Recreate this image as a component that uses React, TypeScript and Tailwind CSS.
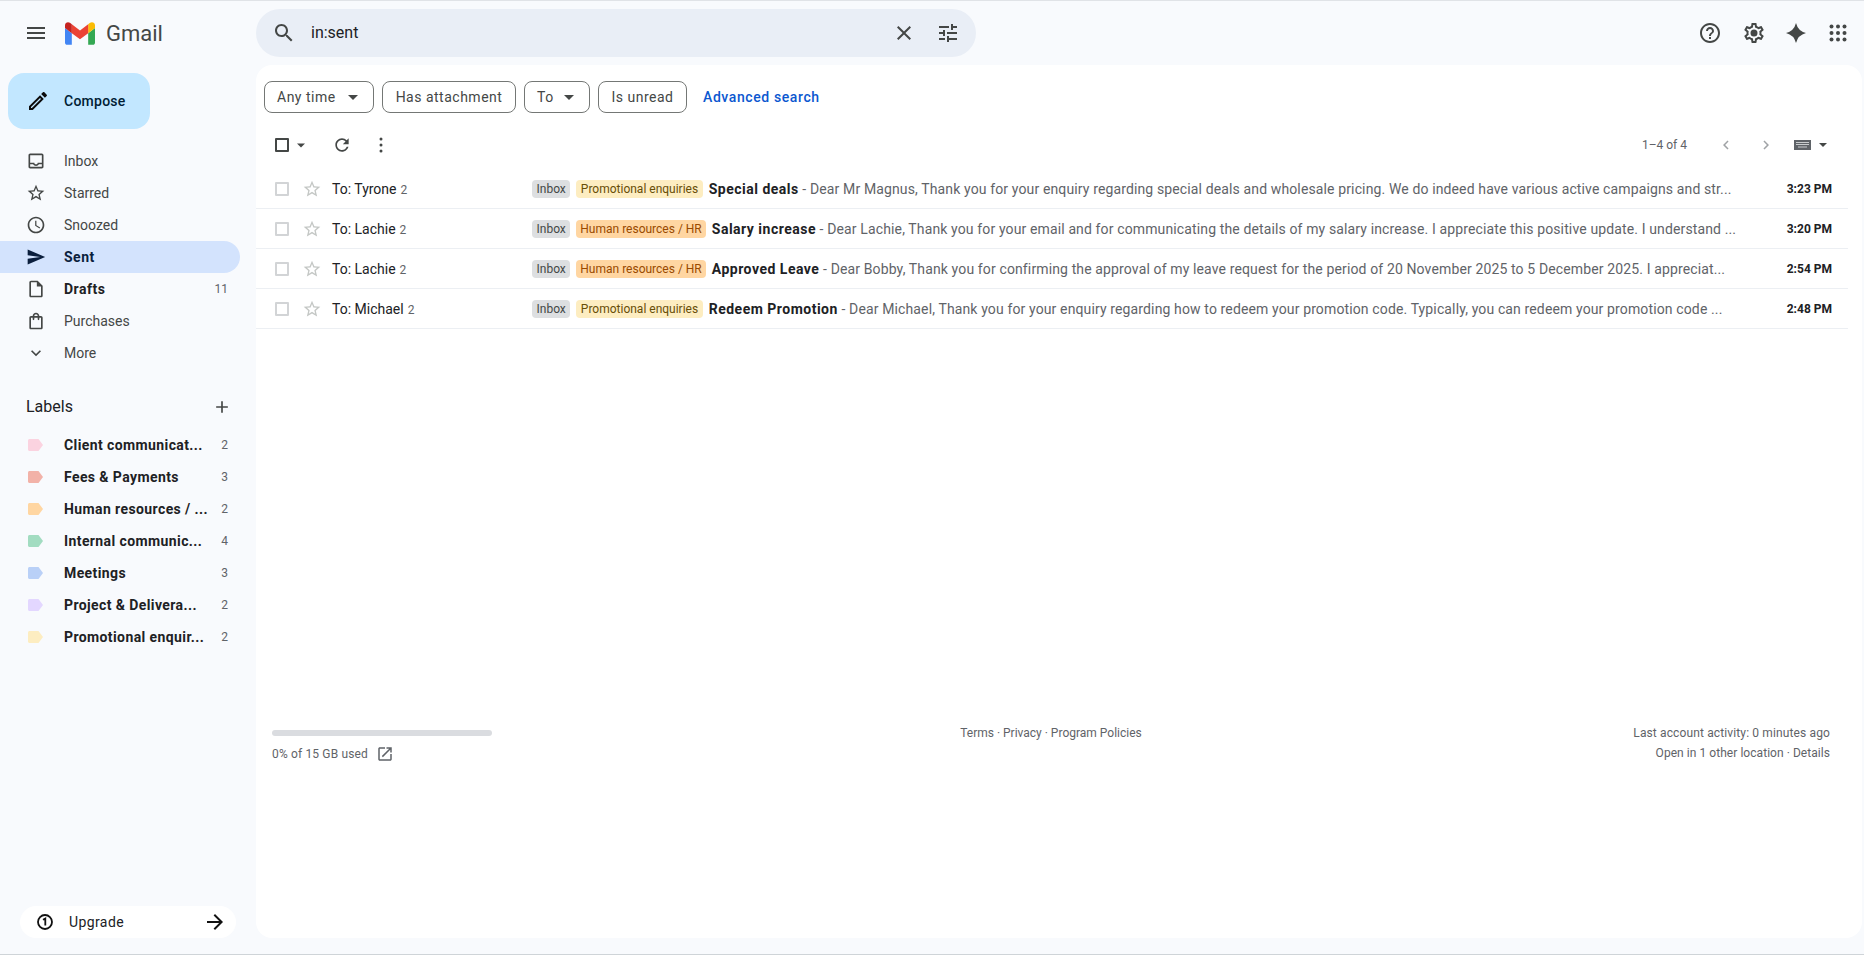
import type { ReactNode } from 'react';

const P = {
  menu: 'M3 18h18v-2H3v2zm0-5h18v-2H3v2zm0-7v2h18V6H3z',
  search: 'M15.5 14h-.79l-.28-.27C15.41 12.59 16 11.11 16 9.5 16 5.91 13.09 3 9.5 3S3 5.91 3 9.5 5.91 16 9.5 16c1.61 0 3.09-.59 4.23-1.57l.27.28v.79l5 4.99L20.49 19l-4.99-5zm-6 0C7.01 14 5 11.99 5 9.5S7.01 5 9.5 5 14 7.01 14 9.5 11.99 14 9.5 14z',
  close: 'M19 6.41L17.59 5 12 10.59 6.41 5 5 6.41 10.59 12 5 17.59 6.41 19 12 13.41 17.59 19 19 17.59 13.41 12z',
  tune: 'M3 17v2h6v-2H3zM3 5v2h10V5H3zm10 16v-2h8v-2h-8v-2h-2v6h2zM7 9v2H3v2h4v2h2V9H7zm14 4v-2H11v2h10zm-6-4h2V7h4V5h-4V3h-2v6z',
  help: 'M11 18h2v-2h-2v2zm1-16C6.48 2 2 6.48 2 12s4.48 10 10 10 10-4.48 10-10S17.52 2 12 2zm0 18c-4.41 0-8-3.59-8-8s3.59-8 8-8 8 3.59 8 8-3.59 8-8 8zm0-14c-2.21 0-4 1.79-4 4h2c0-1.1.9-2 2-2s2 .9 2 2c0 2-3 1.75-3 5h2c0-2.25 3-2.5 3-5 0-2.21-1.79-4-4-4z',
  settings: 'M19.43 12.98c.04-.32.07-.64.07-.98 0-.34-.03-.66-.07-.98l2.11-1.65c.19-.15.24-.42.12-.64l-2-3.46c-.09-.16-.26-.25-.44-.25-.06 0-.12.01-.17.03l-2.49 1c-.52-.4-1.08-.73-1.69-.98l-.38-2.65C14.46 2.18 14.25 2 14 2h-4c-.25 0-.46.18-.49.42l-.38 2.65c-.61.25-1.17.59-1.69.98l-2.49-1c-.06-.02-.12-.03-.18-.03-.17 0-.34.09-.43.25l-2 3.46c-.13.22-.07.49.12.64l2.11 1.65c-.04.32-.07.65-.07.98 0 .33.03.66.07.98l-2.11 1.65c-.19.15-.24.42-.12.64l2 3.46c.09.16.26.25.44.25.06 0 .12-.01.17-.03l2.49-1c.52.4 1.08.73 1.69.98l.38 2.65c.03.24.24.42.49.42h4c.25 0 .46-.18.49-.42l.38-2.65c.61-.25 1.17-.59 1.69-.98l2.49 1c.06.02.12.03.18.03.17 0 .34-.09.43-.25l2-3.46c.12-.22.07-.49-.12-.64l-2.11-1.65zm-1.98-1.71c.04.31.05.52.05.73 0 .21-.02.43-.05.73l-.14 1.13.89.7 1.08.84-.7 1.21-1.27-.51-1.04-.42-.9.68c-.43.32-.84.56-1.25.73l-1.06.43-.16 1.13-.2 1.35h-1.4l-.19-1.35-.16-1.13-1.06-.43c-.43-.18-.83-.41-1.23-.71l-.91-.7-1.06.43-1.27.51-.7-1.21 1.08-.84.89-.7-.14-1.13c-.03-.31-.05-.54-.05-.74s.02-.43.05-.73l.14-1.13-.89-.7-1.08-.84.7-1.21 1.27.51 1.04.42.9-.68c.43-.32.84-.56 1.25-.73l1.06-.43.16-1.13.2-1.35h1.39l.19 1.35.16 1.13 1.06.43c.43.18.83.41 1.23.71l.91.7 1.06-.43 1.27-.51.7 1.21-1.07.85-.89.7.14 1.13zM12 8.5a3.5 3.5 0 1 0 0 7 3.5 3.5 0 0 0 0-7z',
  spark: 'M12 2Q14 10 22 12Q14 14 12 22Q10 14 2 12Q10 10 12 2z',
  edit: 'M14.06 9.02l.92.92L5.92 19H5v-.92l9.06-9.06M17.66 3c-.25 0-.51.1-.7.29l-1.83 1.83 3.75 3.75 1.83-1.83c.39-.39.39-1.02 0-1.41l-2.34-2.34c-.2-.2-.45-.29-.71-.29zm-3.6 3.19L3 17.25V21h3.75L17.81 9.94l-3.75-3.75z',
  inbox: 'M19 3H5c-1.1 0-2 .9-2 2v14c0 1.1.9 2 2 2h14c1.1 0 2-.9 2-2V5c0-1.1-.9-2-2-2zm0 16H5v-3h3.56c.69 1.19 1.97 2 3.45 2s2.75-.81 3.45-2H19v3zm0-5h-4.99c0 1.1-.9 2-2 2s-2-.9-2-2H5V5h14v9z',
  star: 'M22 9.24l-7.19-.62L12 2 9.19 8.63 2 9.24l5.46 4.73L5.82 21 12 17.27 18.18 21l-1.63-7.03L22 9.24zM12 15.4l-3.76 2.27 1-4.28-3.32-2.88 4.38-.38L12 6.1l1.71 4.04 4.38.38-3.32 2.88 1 4.28L12 15.4z',
  clock: 'M11.99 2C6.47 2 2 6.48 2 12s4.47 10 9.99 10C17.52 22 22 17.52 22 12S17.52 2 11.99 2zM12 20c-4.42 0-8-3.58-8-8s3.58-8 8-8 8 3.58 8 8-3.58 8-8 8zm.5-13H11v6l5.25 3.15.75-1.23-4.5-2.67z',
  send: 'M2.01 21L23 12 2.01 3 2 10l15 2-15 2z',
  draft: 'M14 2H6c-1.1 0-1.99.9-1.99 2L4 20c0 1.1.89 2 1.99 2H18c1.1 0 2-.9 2-2V8l-6-6zm4 18H6V4h7v5h5v11z',
  bag: 'M18 6h-2c0-2.21-1.79-4-4-4S8 3.79 8 6H6c-1.1 0-2 .9-2 2v12c0 1.1.9 2 2 2h12c1.1 0 2-.9 2-2V8c0-1.1-.9-2-2-2zm-6-2c1.1 0 2 .9 2 2h-4c0-1.1.9-2 2-2zm6 16H6V8h2v2c0 .55.45 1 1 1s1-.45 1-1V8h4v2c0 .55.45 1 1 1s1-.45 1-1V8h2v12z',
  expand: 'M16.59 8.59L12 13.17 7.41 8.59 6 10l6 6 6-6z',
  add: 'M19 13h-6v6h-2v-6H5v-2h6V5h2v6h6v2z',
  refresh: 'M17.65 6.35C16.2 4.9 14.21 4 12 4c-4.42 0-7.99 3.58-7.99 8s3.57 8 7.99 8c3.73 0 6.84-2.55 7.73-6h-2.08c-.82 2.33-3.04 4-5.65 4-3.31 0-6-2.69-6-6s2.69-6 6-6c1.66 0 3.14.69 4.22 1.78L13 11h7V4l-2.35 2.35z',
  left: 'M15.41 7.41L14 6l-6 6 6 6 1.41-1.41L10.83 12z',
  right: 'M10 6L8.59 7.41 13.17 12l-4.58 4.59L10 18l6-6z',
  open: 'M19 19H5V5h7V3H5c-1.11 0-2 .9-2 2v14c0 1.1.89 2 2 2h14c1.1 0 2-.9 2-2v-7h-2v7zM14 3v2h3.59l-9.83 9.83 1.41 1.41L19 6.41V10h2V3h-7z',
  arrow: 'M12 4l-1.41 1.41L16.17 11H4v2h12.17l-5.58 5.59L12 20l8-8z',
};

function Icon({ d, className }: { d: string; className: string }) {
  return (
    <svg viewBox="0 0 24 24" fill="currentColor" className={className}>
      <path d={d} />
    </svg>
  );
}

function Caret({ className }: { className: string }) {
  return (
    <svg viewBox="0 0 10 5" fill="currentColor" className={className}>
      <path d="M0 0h10L5 5z" />
    </svg>
  );
}

function GmailLogo() {
  return (
    <svg viewBox="52 42 88 66" className="h-[23px] w-[30px]">
      <path fill="#4285f4" d="M58 108h14V74L52 59v43c0 3.32 2.69 6 6 6" />
      <path fill="#34a853" d="M120 108h14c3.32 0 6-2.69 6-6V59l-20 15" />
      <path fill="#fbbc04" d="M120 48v26l20-15v-8c0-7.42-8.47-11.65-14.4-7.2" />
      <path fill="#ea4335" d="M72 74V48l24 18 24-18v26L96 92" />
      <path fill="#c5221f" d="M52 51v8l20 15V48l-5.6-4.2c-5.94-4.45-14.4-.22-14.4 7.2" />
    </svg>
  );
}

function LabelTag({ color }: { color: string }) {
  return (
    <svg viewBox="0 0 15 12" className="h-3 w-[15px]" fill={color}>
      <path d="M1.5 0H10.5L15 6 10.5 12H1.5C.7 12 0 11.3 0 10.5V1.5C0 .7.7 0 1.5 0z" />
    </svg>
  );
}

function NavRow({ icon, label, count, active, bold }: { icon: ReactNode; label: string; count?: string; active?: boolean; bold?: boolean }) {
  return (
    <div className={`flex h-8 w-[240px] items-center rounded-r-full pl-[26px] pr-3 text-sm ${active ? 'bg-[#d3e3fd] font-bold tracking-[0.5px] text-[#0b1f3d]' : 'text-[#444746]'}`}>
      <span className="flex w-[38px] shrink-0 items-center">{icon}</span>
      <span className={bold ? 'font-bold tracking-[0.5px] text-[#202124]' : ''}>{label}</span>
      {count && <span className="ml-auto text-xs text-[#5f6368]">{count}</span>}
    </div>
  );
}

const labels = [
  { name: 'Client communicat...', color: '#fbd3e0', count: '2' },
  { name: 'Fees & Payments', color: '#f2b2a8', count: '3' },
  { name: 'Human resources / ...', color: '#ffd6a2', count: '2' },
  { name: 'Internal communic...', color: '#a2dcc1', count: '4' },
  { name: 'Meetings', color: '#b9d0f7', count: '3' },
  { name: 'Project & Delivera...', color: '#e3d7ff', count: '2' },
  { name: 'Promotional enquir...', color: '#fdedc1', count: '2' },
];

const PROMO = { name: 'Promotional enquiries', cls: 'bg-[#fdedc1] px-[4.5px] text-[#684e07]' };
const HR = { name: 'Human resources / HR', cls: 'bg-[#ffd6a2] px-[4px] text-[#994a00]' };

const rows = [
  { to: 'Tyrone', label: PROMO, subject: 'Special deals', time: '3:23 PM', snippet: 'Dear Mr Magnus, Thank you for your enquiry regarding special deals and wholesale pricing. We do indeed have various active campaigns and str...' },
  { to: 'Lachie', label: HR, subject: 'Salary increase', time: '3:20 PM', snippet: 'Dear Lachie, Thank you for your email and for communicating the details of my salary increase. I appreciate this positive update. I understand ...' },
  { to: 'Lachie', label: HR, subject: 'Approved Leave', time: '2:54 PM', snippet: 'Dear Bobby, Thank you for confirming the approval of my leave request for the period of 20 November 2025 to 5 December 2025. I appreciat...' },
  { to: 'Michael', label: PROMO, subject: 'Redeem Promotion', time: '2:48 PM', snippet: 'Dear Michael, Thank you for your enquiry regarding how to redeem your promotion code. Typically, you can redeem your promotion code ...' },
];

function FilterChip({ label, caret, width }: { label: string; caret?: boolean; width: string }) {
  return (
    <div className={`flex h-8 items-center rounded-lg border border-[#747775] text-sm tracking-[0.5px] text-[#444746] ${width} ${caret ? 'justify-between pl-3 pr-[15px]' : 'justify-center'}`}>
      {label}
      {caret && <Caret className="h-[5px] w-[10px]" />}
    </div>
  );
}

function Sidebar() {
  return (
    <aside className="mb-4 flex w-[256px] shrink-0 flex-col">
      <div className="ml-2 mt-2 flex h-14 w-[142px] items-center rounded-2xl bg-[#c2e7ff] pl-[18px] text-sm font-medium tracking-[0.25px] text-[#001d35]">
        <Icon d={P.edit} className="mr-[14px] h-6 w-6 text-[#0b0b0b]" />
        Compose
      </div>
      <nav className="mt-4">
        <NavRow icon={<Icon d={P.inbox} className="h-5 w-5" />} label="Inbox" />
        <NavRow icon={<Icon d={P.star} className="h-5 w-5" />} label="Starred" />
        <NavRow icon={<Icon d={P.clock} className="h-5 w-5" />} label="Snoozed" />
        <NavRow icon={<Icon d={P.send} className="h-5 w-5" />} label="Sent" active />
        <NavRow icon={<Icon d={P.draft} className="h-5 w-5" />} label="Drafts" count="11" bold />
        <NavRow icon={<Icon d={P.bag} className="h-5 w-5" />} label="Purchases" />
        <NavRow icon={<Icon d={P.expand} className="h-5 w-5" />} label="More" />
      </nav>
      <div className="mt-[18px] flex h-10 items-center pl-[26px] pr-[24px] text-base text-[#202124]">
        Labels
        <Icon d={P.add} className="ml-auto h-5 w-5 text-[#444746]" />
      </div>
      <div className="mt-[2px]">
        {labels.map((l) => (
          <div key={l.name} className="flex h-8 items-center pl-[28px] pr-[28px] text-sm font-bold tracking-[0.4px] text-[#202124]">
            <span className="flex w-[36px] shrink-0 items-center"><LabelTag color={l.color} /></span>
            <span>{l.name}</span>
            <span className="ml-auto text-xs font-normal tracking-normal text-[#5f6368]">{l.count}</span>
          </div>
        ))}
      </div>
      <div className="mx-5 mt-auto flex h-8 w-[216px] items-center rounded-full bg-white pl-[16px] pr-[9px] text-sm tracking-[0.4px] text-[#202124]">
        <svg viewBox="0 0 18 18" className="mr-[15px] h-[18px] w-[18px]" fill="none" stroke="#111" strokeWidth="1.8">
          <circle cx="9" cy="9" r="7" />
          <path d="M7 6.8 9.3 5.6V12.6" />
        </svg>
        Upgrade
        <Icon d={P.arrow} className="ml-auto h-6 w-6 text-[#111]" />
      </div>
    </aside>
  );
}

function MailRow({ row }: { row: (typeof rows)[number] }) {
  return (
    <div className="flex h-10 items-center border-b border-[#eceff3] text-sm">
      <span className="ml-[19px] h-[14px] w-[14px] shrink-0 rounded-[1px] border-2 border-[#d2d4d6]" />
      <Icon d={P.star} className="ml-[13px] h-5 w-5 shrink-0 text-[#c4c7c5]" />
      <div className="ml-[10px] flex w-[200px] shrink-0 items-baseline gap-1 text-[#202124]">
        <span>To: {row.to}</span>
        <span className="text-xs text-[#5f6368]">2</span>
      </div>
      <span className="flex h-[18px] items-center rounded-[4px] bg-[#dddfe1] px-[4.5px] text-xs text-[#444746]">Inbox</span>
      <span className={`ml-[6px] flex h-[18px] shrink-0 items-center rounded-[4px] text-xs ${row.label.cls}`}>{row.label.name}</span>
      <div className="ml-[6px] min-w-0 flex-1 whitespace-nowrap">
        <span className="font-bold tracking-[0.5px] text-[#202124]">{row.subject}</span>
        <span className="tracking-[0.13px] text-[#5f6368]"> - {row.snippet}</span>
      </div>
      <span className="mr-[16px] shrink-0 text-right text-xs font-bold text-[#202124]">{row.time}</span>
    </div>
  );
}

function MailPanel() {
  return (
    <main className="mb-4 mr-[2px] flex min-w-0 flex-1 flex-col rounded-2xl bg-white">
      <div className="flex items-center gap-2 pl-2 pt-4">
        <FilterChip label="Any time" caret width="w-[110px]" />
        <FilterChip label="Has attachment" width="w-[134px]" />
        <FilterChip label="To" caret width="w-[66px]" />
        <FilterChip label="Is unread" width="w-[89px]" />
        <span className="ml-[8px] text-sm font-medium tracking-[0.6px] text-[#0b57d0]">Advanced search</span>
      </div>
      <div className="mr-[14px] mt-3 flex h-10 items-center pl-[19px] pr-[21px] text-[#444746]">
        <span className="h-[14px] w-[14px] rounded-[1px] border-2 border-[#444746]" />
        <Caret className="ml-[8px] h-[5px] w-[8px]" />
        <Icon d={P.refresh} className="ml-[27px] h-[20px] w-[20px]" />
        <svg viewBox="0 0 4 16" fill="currentColor" className="ml-[27px] h-4 w-1">
          <circle cx="2" cy="2" r="1.5" />
          <circle cx="2" cy="8" r="1.5" />
          <circle cx="2" cy="14" r="1.5" />
        </svg>
        <span className="ml-auto text-xs text-[#5f6368]">1–4 of 4</span>
        <Icon d={P.left} className="ml-[30px] h-[18px] w-[18px] text-[#a0a3a6]" />
        <Icon d={P.right} className="ml-[22px] h-[18px] w-[18px] text-[#a0a3a6]" />
        <svg viewBox="0 0 17 10" className="ml-[19px] h-[10px] w-[17px]" fill="#5f6368">
          <path d="M0 0h17v10H0z" />
          <path d="M2 2h13v1H2zM2 4h13v1H2zM4 6.5h9v1H4z" fill="#c9ccce" />
        </svg>
        <Caret className="ml-[8px] h-[4px] w-[8px]" />
      </div>
      <div className="mr-[14px] mt-1">
        {rows.map((r) => (
          <MailRow key={r.subject} row={r} />
        ))}
      </div>
      <footer className="mr-[14px] mt-[394px] grid grid-cols-3 pl-4 pr-[18px] text-xs text-[#5f6368]">
        <div className="tracking-[0.15px]">
          <div className="mt-[7px] h-[6px] w-[220px] rounded-full bg-[#dadce0]" />
          <div className="mt-[9px] flex items-center">
            0% of 15 GB used
            <Icon d={P.open} className="ml-[8px] h-[18px] w-[18px] text-[#5f6368]" />
          </div>
        </div>
        <div className="mt-[2px] text-center">Terms · Privacy · Program Policies</div>
        <div className="text-right leading-5">
          <div className="tracking-[0.13px]">Last account activity: 0 minutes ago</div>
          <div className="tracking-[0.05px]">Open in 1 other location · Details</div>
        </div>
      </footer>
    </main>
  );
}

export default function App() {
  return (
    <div className="flex h-screen w-full flex-col overflow-hidden bg-[#f8fafd] font-['Roboto',sans-serif] text-[#202124]">
      <div className="h-px bg-[#e0e3e7]" />
      <header className="flex h-16 shrink-0 items-center">
        <div className="flex w-[256px] shrink-0 items-center pl-6">
          <Icon d={P.menu} className="h-6 w-6 text-[#444746]" />
          <span className="ml-[17px]"><GmailLogo /></span>
          <span className="ml-[11px] text-[22px] text-[#444746]">Gmail</span>
        </div>
        <div className="flex h-12 w-[720px] items-center rounded-full bg-[#e9eef6] pl-4 pr-4 text-[#444746]">
          <Icon d={P.search} className="h-6 w-6" />
          <span className="ml-[15px] text-base text-[#202124]">in:sent</span>
          <Icon d={P.close} className="ml-auto h-6 w-6" />
          <Icon d={P.tune} className="ml-[20px] h-6 w-6" />
        </div>
        <div className="ml-auto flex items-center gap-[18px] pr-[14px] text-[#444746]">
          <Icon d={P.help} className="mr-[2px] h-6 w-6" />
          <Icon d={P.settings} className="h-6 w-6" />
          <Icon d={P.spark} className="h-6 w-6" />
          <svg viewBox="0 0 18 18" fill="currentColor" className="mx-[3px] h-[18px] w-[18px]">
            {[2.5, 9, 15.5].flatMap((y) =>
              [2.5, 9, 15.5].map((x) => <circle key={`${x}-${y}`} cx={x} cy={y} r="2" />),
            )}
          </svg>
        </div>
      </header>
      <div className="flex min-h-0 flex-1">
        <Sidebar />
        <MailPanel />
      </div>
      <div className="h-px shrink-0 bg-[#cfd4d8]" />
    </div>
  );
}
